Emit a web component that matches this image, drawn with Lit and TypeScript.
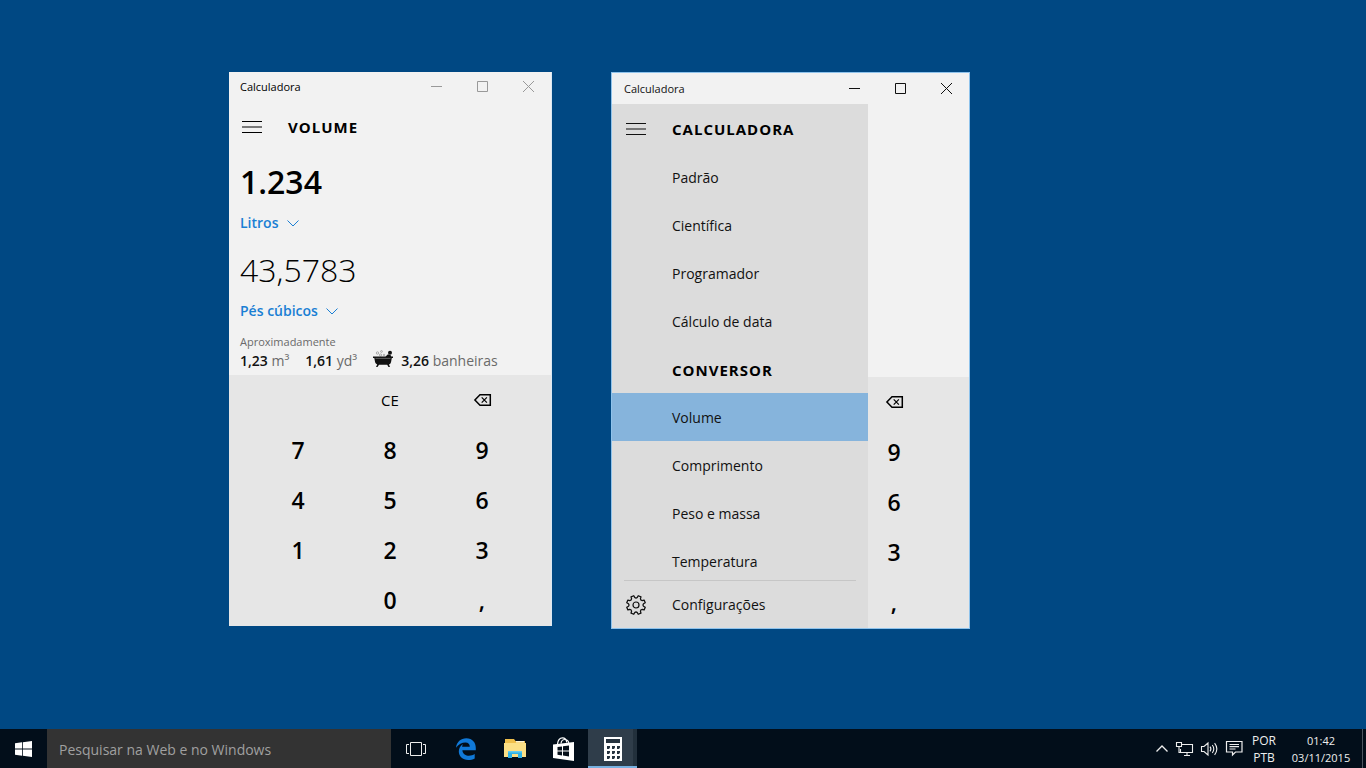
import { LitElement, html, css, svg, nothing } from "lit";
import { customElement, property } from "lit/decorators.js";
import { classMap } from "lit/directives/class-map.js";

const base = css`
  * { box-sizing: border-box; }
  button {
    display: flex;
    align-items: center;
    justify-content: center;
    margin: 0;
    padding: 0;
    border: 0;
    background: none;
    color: inherit;
    font: inherit;
  }
  svg { display: block; flex: none; overflow: visible; }
`;

const stroke = (w: number, h: number, body: unknown, width = 1) => html`
  <svg width=${w} height=${h} viewBox="0 0 ${w} ${h}" fill="none" stroke="currentColor" stroke-width=${width} aria-hidden="true">${body}</svg>
`;

const minimizeIcon = stroke(11, 11, svg`<path d="M0 5.500h11"/>`);
const maximizeIcon = stroke(11, 11, svg`<path d="M.5 .5h10v10h-10z"/>`);
const closeIcon = stroke(11, 11, svg`<path d="M0 0l11 11M11 0L0 11"/>`);
const menuIcon = stroke(20, 12, svg`<path d="M0 .5h20M0 6h20M0 11.500h20"/>`);
const chevronDown = stroke(12, 7, svg`<path d="M.5 .5l5.500 5.500 5.500-5.500"/>`);
const backspaceIcon = stroke(17, 12, svg`<path d="M6 .7h10.300v10.600H6L.9 6z" stroke-width="1.500"/><path d="M7.700 3.400l5.200 5.200M12.900 3.400l-5.200 5.200" stroke-width="1.200"/>`);

const gearPath = (() => {
  const pts: string[] = [];
  const polar = (r: number, deg: number) => {
    const a = (deg * Math.PI) / 180;
    return `${(10 + r * Math.cos(a)).toFixed(2)} ${(10 + r * Math.sin(a)).toFixed(2)}`;
  };
  for (let i = 0; i < 8; i++) {
    const c = i * 45 + 22.5;
    pts.push(`${i ? "L" : "M"}${polar(9.5, c - 9)}`, `L${polar(9.5, c + 9)}`, `L${polar(7.6, c + 13)}`, `Q${polar(6.4, c + 22.5)} ${polar(7.6, c + 32)}`);
  }
  return pts.join("") + "z";
})();
const gearIcon = stroke(20, 20, svg`<path d=${gearPath} stroke-linejoin="round" stroke-width="1.300"/><circle cx="10" cy="10" r="3" stroke-width="1.200"/>`);

const bathIcon = html`
  <svg width="20" height="18" viewBox="0 0 20 18" aria-hidden="true">
    <g fill="none" stroke="#999" stroke-width=".8">
      <circle cx="4.500" cy="3" r="1.200"/><circle cx="8.500" cy="1.500" r=".9"/><circle cx="7.500" cy="5" r="1.100"/><circle cx="11" cy="5" r=".8"/>
    </g>
    <circle cx="17" cy="2.700" r="2" fill="#111"/>
    <path fill="#111" d="M0 6.500h12.500l2.500-2.200 2.500.7.800 1.500H20v1.600h-1.200l-.8 4.200q-.4 1.700-2 2.200l1 2.500h-1.500l-1.300-2.200H6L4.500 17H3l1.200-2.600q-1.700-.5-2.100-2.100L1.300 8.100H0z"/>
    <path d="M2.500 8.400h15" stroke="#aaa" stroke-width=".5"/>
  </svg>
`;

@customElement("calc-titlebar")
class CalcTitlebar extends LitElement {
  @property({ type: Boolean }) inactive = false;

  static styles = [base, css`
    :host { display: block; }
    .bar { display: flex; height: 31px; align-items: center; padding-left: 12px; }
    .name { flex: 1; font-size: 11px; line-height: 16px; }
    .control { width: 46px; height: 31px; }
    .inactive { padding-left: 11px; height: 30px; margin-bottom: 1px; }
    .inactive .control { color: #999; height: 29px; align-self: flex-start; }
  `];

  render() {
    return html`
      <header class=${classMap({ bar: true, inactive: this.inactive })}>
        <span class="name">Calculadora</span>
        <button class="control" aria-label="Minimizar">${minimizeIcon}</button>
        <button class="control" aria-label="Maximizar">${maximizeIcon}</button>
        <button class="control" aria-label="Fechar">${closeIcon}</button>
      </header>
    `;
  }
}

@customElement("calc-keypad")
class CalcKeypad extends LitElement {
  @property({ type: Array }) keys: string[] = [];
  @property({ type: Boolean }) narrow = false;

  static styles = [base, css`
    :host { display: block; background: #e6e6e6; }
    .pad { display: grid; grid-template-columns: repeat(3, 1fr); grid-auto-rows: 50px; padding: 0 23px 1px; }
    .narrow { grid-template-columns: 52px; padding: 0 0 1px; }
    .key { font-size: 23px; line-height: 30px; font-weight: 600; color: #000; }
    .clear { font-size: 15px; font-weight: 400; }
  `];

  render() {
    return html`
      <div class=${classMap({ pad: true, narrow: this.narrow })}>
        ${this.keys.map((k) =>
          k === ""
            ? html`<span></span>`
            : k === "back"
              ? html`<button class="key" aria-label="Backspace">${backspaceIcon}</button>`
              : html`<button class=${classMap({ key: true, clear: k === "CE" })}>${k}</button>`
        )}
      </div>
    `;
  }
}

@customElement("calc-converter")
class CalcConverter extends LitElement {
  static styles = [base, css`
    :host { display: flex; flex-direction: column; background: #f2f2f2; border-right: 1px solid #dbe8f3; color: #000; }
    .head { display: flex; align-items: center; height: 48px; }
    .menu { width: 46px; height: 48px; }
    .mode { margin: 0 0 0 13px; font-size: 15px; line-height: 20px; font-weight: 700; letter-spacing: 1px; }
    .display { display: flex; flex-direction: column; flex: 1; gap: 6px; padding: 7px 11px 3px; }
    .value { display: block; font-size: 32px; line-height: 48px; font-weight: 600; }
    .result { font-weight: 300; }
    .unit { display: flex; align-items: center; gap: 8px; height: 34px; color: #1a7fd4; }
    .unit select { appearance: none; margin: 0; padding: 0; border: 0; background: none; color: inherit; font: inherit; font-size: 14px; line-height: 20px; font-weight: 600; }
    .approx { font-size: 11px; line-height: 16px; color: #6a6a6a; }
    .facts { display: flex; align-items: center; font-size: 14px; line-height: 22px; color: #6a6a6a; gap: 16px; }
    .facts b { color: #111; font-weight: 600; }
    .bath { display: flex; align-items: center; gap: 8px; }
    .bath svg { align-self: flex-start; }
  `];

  unit(name: string, label: string) {
    return html`<div class="unit"><select aria-label=${label}><option>${name}</option></select>${chevronDown}</div>`;
  }

  render() {
    return html`
      <calc-titlebar inactive></calc-titlebar>
      <div class="head">
        <button class="menu" aria-label="Menu">${menuIcon}</button>
        <h1 class="mode">VOLUME</h1>
      </div>
      <div class="display">
        <div><output class="value">1.234</output>${this.unit("Litros", "De")}</div>
        <div><output class="value result">43,5783</output>${this.unit("Pés cúbicos", "Para")}</div>
        <div>
          <div class="approx">Aproximadamente</div>
          <div class="facts">
            <span><b>1,23</b> m³</span>
            <span><b>1,61</b> yd³</span>
            <span class="bath">${bathIcon}<span><b>3,26</b> banheiras</span></span>
          </div>
        </div>
      </div>
      <calc-keypad .keys=${["", "CE", "back", "7", "8", "9", "4", "5", "6", "1", "2", "3", "", "0", ","]}></calc-keypad>
    `;
  }
}

@customElement("calc-menu")
class CalcMenu extends LitElement {
  static styles = [base, css`
    :host { display: flex; flex-direction: column; background: #f2f2f2; border: 1px solid #8fc3ec; color: #111; }
    .body { display: flex; flex: 1; min-height: 0; }
    .nav { display: flex; flex-direction: column; width: 256px; background: #dcdcdc; }
    .list { flex: 1; min-height: 0; overflow: hidden; padding-top: 1px; }
    .row { display: flex; align-items: center; height: 48px; width: 100%; padding: 2px 0 0 60px; color: inherit; text-decoration: none; font-size: 14px; line-height: 20px; }
    .head { padding: 0; }
    .menu { width: 48px; height: 48px; margin-right: 12px; }
    .title { margin: 0; font-size: 15px; line-height: 20px; font-weight: 700; letter-spacing: 1px; color: #000; }
    .selected { background: #86b4dc; }
    .settings { display: flex; height: 48px; margin: 0 12px; border-top: 1px solid #c6c6c6; }
    .settings .row { height: 47px; padding: 0 0 0 2px; gap: 26px; justify-content: flex-start; }
    .side { display: flex; flex-direction: column; flex: 1; justify-content: flex-end; }
  `];

  item(name: string) {
    const selected = name === "Volume";
    return html`<a href="#" class=${classMap({ row: true, selected })} aria-current=${selected ? "page" : nothing}>${name}</a>`;
  }

  render() {
    return html`
      <calc-titlebar></calc-titlebar>
      <div class="body">
        <nav class="nav">
          <div class="list">
            <div class="row head">
              <button class="menu" aria-label="Menu">${menuIcon}</button>
              <h2 class="title">CALCULADORA</h2>
            </div>
            ${["Padrão", "Científica", "Programador", "Cálculo de data"].map((n) => this.item(n))}
            <div class="row"><h2 class="title">CONVERSOR</h2></div>
            ${["Volume", "Comprimento", "Peso e massa", "Temperatura"].map((n) => this.item(n))}
          </div>
          <div class="settings"><button class="row">${gearIcon}Configurações</button></div>
        </nav>
        <div class="side">
          <calc-keypad narrow .keys=${["back", "9", "6", "3", ","]}></calc-keypad>
        </div>
      </div>
    `;
  }
}

const startIcon = html`<svg width="17" height="16" viewBox="0 0 17 16" fill="#fff" aria-hidden="true"><path d="M0 2.300l7-1v6.300H0zM7.800 1.200L17 0v7.600H7.800zM0 8.400h7v6.300l-7-1zM7.800 8.400H17V16l-9.200-1.200z"/></svg>`;
const taskViewIcon = stroke(20, 14, svg`<path d="M4.500 .5h11v13h-11zM3 2.500H.5v9H3M17 2.500h2.500v9H17"/>`);
const edgeIcon = html`<svg width="20" height="22" viewBox="0 0 20 22" fill="#1079d8" aria-hidden="true"><path d="M0 9.700C.7 4 4.800 .3 10.300 .3c6.200 0 9.500 4.500 9.500 9.700v2.300H6.400c.3 4 3.600 5.500 6.500 5.500 2.200 0 4.200-.7 5.800-1.700v4.300c-1.900 1-4.200 1.500-6.600 1.500-5.500 0-9.300-3.400-9.300-8.300 0-3.200 1.500-5.800 4.300-7.500-.6.700-.9 1.700-1 2.600h7.700c0-2.700-1.400-4.300-4.400-4.300C6 4.400 2.500 6 0 9.700z"/></svg>`;
const explorerIcon = html`
  <svg width="22" height="19" viewBox="0 0 22 19" aria-hidden="true">
    <path fill="#efbf4b" d="M1 0h9l1.500 2H21v4H1z"/>
    <path fill="#fbf3d8" d="M12 2h8v1.500h-8z"/>
    <path fill="#fbdf85" d="M0 4h22v14H0z"/>
    <path fill="#2fb2e6" d="M4 19v-7h14v7h-4v-4H8v4z"/>
    <path fill="#62ccf0" d="M4 12h14v1.500H4z"/>
  </svg>`;
const storeIcon = html`
  <svg width="21" height="24" viewBox="0 0 21 24" aria-hidden="true">
    <path d="M4.500 7C5 2.500 7 .8 9.500 .8c2.300 0 3.800 1.500 4.300 4.700M8 6.500c.3-2.700 2-4 3.800-4s3.600 1.300 4 3.500" fill="none" stroke="#fff" stroke-width="1.200"/>
    <path fill="#fff" d="M0 7.500L21 5v19L0 21z"/>
    <path fill="#06101a" d="M4.500 10l4.500-.6v4H4.500zM10 9.200l6-.8v5h-6zM4.500 14.400H9v4l-4.500-.6zM10 14.400h6v5l-6-.8z"/>
  </svg>`;
const calcIcon = html`
  <svg width="18" height="24" viewBox="0 0 18 24" aria-hidden="true">
    <path fill="#fff" d="M0 0h18v24H0z"/>
    <path fill="#26333f" d="M2 2h14v4H2zM3 9h3v1.500L5 12H3zM8 9h3v1.500L10 12H8zM13 9h3v1.500L15 12h-2zM3 14h3v1.500L5 17H3zM8 14h3v1.500L10 17H8zM13 14h3v1.500L15 17h-2zM3 19h3v1.500L5 22H3zM8 19h3v1.500L10 22H8zM13 19h3v1.500L15 22h-2z"/>
  </svg>`;
const trayUp = stroke(12, 7, svg`<path d="M.5 6.500L6 1l5.500 5.500"/>`, 1.3);
const networkIcon = stroke(17, 14, svg`<path d="M6 2.500h10.500v8H4.500V7M8 13.500h6M11 10.500v3M.5 .5h5v4h-5zM3 4.500v6h2"/>`, 1.1);
const soundIcon = stroke(17, 14, svg`<path d="M.5 4.500H3L7 1v12L3 9.500H.5zM9 4.700q1.800 2.300 0 4.600M11.300 3q3 4 0 8M13.600 1.200q4.500 5.800 0 11.600"/>`, 1.1);
const noteIcon = stroke(17, 15, svg`<path d="M.5 .5H16V11H9.500L6.500 14v-3h-6zM3.500 3.500H13M3.500 5.700H13M3.500 8h6"/>`, 1.2);

@customElement("task-bar")
class TaskBar extends LitElement {
  static styles = [base, css`
    :host { display: flex; height: 39px; background: #020e1a; color: #eee; }
    .start { width: 46px; margin-right: 1px; }
    .search { width: 344px; height: 39px; margin: 0; padding: 2px 12px 0; border: 0; border-radius: 0; background: #333; color: #ddd; font: inherit; font-size: 14px; outline: 0; }
    .search::placeholder { color: #a0a0a0; opacity: 1; }
    .app { width: 49px; height: 39px; }
    .view { width: 50px; }
    .active { background: #2f3d4a; box-shadow: inset 0 -2px #76b0e0, inset -4px 0 #22303c; }
    .tray { display: flex; align-items: center; margin-left: auto; }
    .icons { display: flex; align-items: center; gap: 8px; margin-right: 9px; }
    .lang { margin-right: 4px; font-size: 12px; line-height: 17px; text-align: center; }
    .clock { width: 82px; font-size: 11px; line-height: 17px; text-align: center; }
    .desktop { width: 4px; height: 39px; border-left: 1px solid #4c5660; }
  `];

  render() {
    return html`
      <button class="start" aria-label="Iniciar">${startIcon}</button>
      <input class="search" type="search" aria-label="Pesquisar" placeholder="Pesquisar na Web e no Windows">
      <button class="app view" aria-label="Visão de tarefas">${taskViewIcon}</button>
      <button class="app" aria-label="Edge">${edgeIcon}</button>
      <button class="app" aria-label="Explorador">${explorerIcon}</button>
      <button class="app" aria-label="Loja">${storeIcon}</button>
      <button class="app active" aria-label="Calculadora">${calcIcon}</button>
      <div class="tray">
        <div class="icons">
          <button aria-label="Ícones ocultos">${trayUp}</button>
          <button aria-label="Rede">${networkIcon}</button>
          <button aria-label="Som">${soundIcon}</button>
          <button aria-label="Notificações">${noteIcon}</button>
        </div>
        <button class="lang">POR<br>PTB</button>
        <button class="clock">01:42<br>03/11/2015</button>
        <button class="desktop" aria-label="Área de trabalho"></button>
      </div>
    `;
  }
}

@customElement("app-root")
class AppRoot extends LitElement {
  static styles = [base, css`
    :host { display: flex; flex-direction: column; height: 100vh; overflow: hidden; background: #004883; font-family: "Open Sans", "Noto Sans", sans-serif; }
    .desktop { position: relative; flex: 1; }
    .window { position: absolute; top: 72px; }
    .first { left: 229px; width: 323px; height: 554px; }
    .second { left: 611px; width: 359px; height: 557px; }
  `];

  render() {
    return html`
      <main class="desktop">
        <calc-converter class="window first"></calc-converter>
        <calc-menu class="window second"></calc-menu>
      </main>
      <task-bar></task-bar>
    `;
  }
}
